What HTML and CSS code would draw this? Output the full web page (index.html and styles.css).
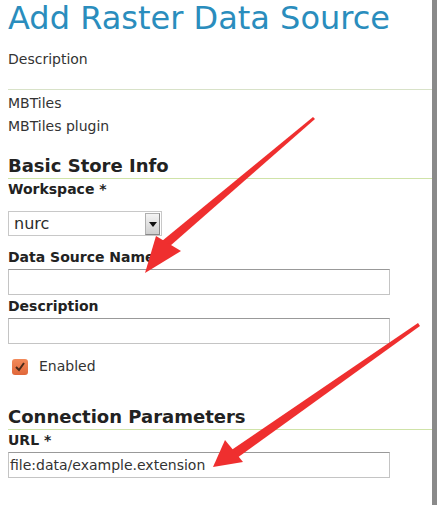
FILE: index.html
```html
<!DOCTYPE html>
<html lang="en">
<head>
    <meta charset="UTF-8">
    <title>Add Raster Data Source</title>
    <link rel="stylesheet" href="styles.css">
</head>
<body>
    <div class="page">
        <h1 class="titulo">Add Raster Data Source</h1>
        <p class="desc">Description</p>
        <div class="tipo">
            <p>MBTiles</p>
            <p>MBTiles plugin</p>
        </div>

        <h2 class="secao">Basic Store Info</h2>
        <label class="rotulo">Workspace *</label>
        <div class="select">
            <span>nurc</span>
            <span class="seta"></span>
        </div>

        <label class="rotulo">Data Source Name *</label>
        <div class="campo"></div>

        <label class="rotulo">Description</label>
        <div class="campo"></div>

        <div class="check">
            <span class="caixa">
                <svg width="12" height="12" viewBox="0 0 12 12"><path d="M2 6 L5 9 L10 2" fill="none" stroke="#4a2a1a" stroke-width="2"/></svg>
            </span>
            <span>Enabled</span>
        </div>

        <h2 class="secao secao2">Connection Parameters</h2>
        <label class="rotulo">URL *</label>
        <div class="campo campo-url">file:data/example.extension</div>
    </div>

    <svg class="setas" width="437" height="505" viewBox="0 0 437 505">
        <polygon points="313,117 315,119 170,246 162,241" fill="#ef2f2f"/>
        <polygon points="145,273 156,236 181,251" fill="#ef2f2f"/>
        <polygon points="418,323 420,326 237,458 230,451" fill="#ef2f2f"/>
        <polygon points="213,467 225,440 243,462" fill="#ef2f2f"/>
    </svg>
</body>
</html>
```

FILE: styles.css
```css
* {
    margin: 0;
    padding: 0;
    box-sizing: border-box;
}
body {
    background-color: #fff;
    font-family: "DejaVu Sans", Verdana, sans-serif;
    color: #2b2b2b;
    position: relative;
    width: 437px;
    height: 505px;
    overflow: hidden;
}
.page {
    height: 505px;
    width: 437px;
    padding: 0 0 0 8px;
    border-right: 5px solid #8a8a8a;
}
.titulo {
    font-weight: normal;
    font-size: 32px;
    color: #2a8dbd;
    line-height: 36px;
}
.desc {
    font-size: 14px;
    margin-top: 14px;
    line-height: 18px;
    color: #333;
}
.tipo {
    margin-top: 21px;
    border-top: 1px solid #d8e2c8;
    padding-top: 2px;
    font-size: 14px;
    line-height: 23px;
    color: #333;
}
.secao {
    font-size: 18px;
    font-weight: bold;
    line-height: 25px;
    margin-top: 15px;
    border-bottom: 1px solid #cfe3a8;
    color: #222;
}
.secao2 {
    margin-top: 29px;
}
.rotulo {
    display: block;
    font-size: 14px;
    font-weight: bold;
    line-height: 20px;
    color: #222;
}
.select {
    margin-top: 12px;
    width: 154px;
    height: 25px;
    border: 1px solid #c8c8c8;
    display: flex;
    align-items: center;
    justify-content: space-between;
    font-size: 16px;
    padding-left: 5px;
    margin-bottom: 11px;
}
.seta {
    width: 15px;
    height: 22px;
    margin-right: 1px;
    background: linear-gradient(#f4f4f4, #cfcfcf);
    border: 1px solid #b0b0b0;
    border-right-color: #888;
    border-bottom-color: #888;
    position: relative;
}
.seta::after {
    content: "";
    position: absolute;
    left: 3px;
    top: 8px;
    border-left: 4px solid transparent;
    border-right: 4px solid transparent;
    border-top: 5px solid #111;
}
.campo {
    width: 382px;
    height: 26px;
    border: 1px solid #c4c4c4;
    border-top-color: #999;
    margin-top: 2px;
    margin-bottom: 1px;
}
.campo-url {
    margin-top: 2px;
    font-size: 14px;
    line-height: 24px;
    padding-left: 1px;
    color: #333;
}
.check {
    display: flex;
    align-items: center;
    gap: 11px;
    margin-top: 14px;
    margin-left: 4px;
    font-size: 14px;
    line-height: 17px;
    color: #333;
}
.caixa {
    width: 16px;
    height: 16px;
    border-radius: 3px;
    background: linear-gradient(#f28a5a, #e0673a);
    display: flex;
    align-items: center;
    justify-content: center;
}
.setas {
    position: absolute;
    left: 0;
    top: 0;
    pointer-events: none;
}
```
